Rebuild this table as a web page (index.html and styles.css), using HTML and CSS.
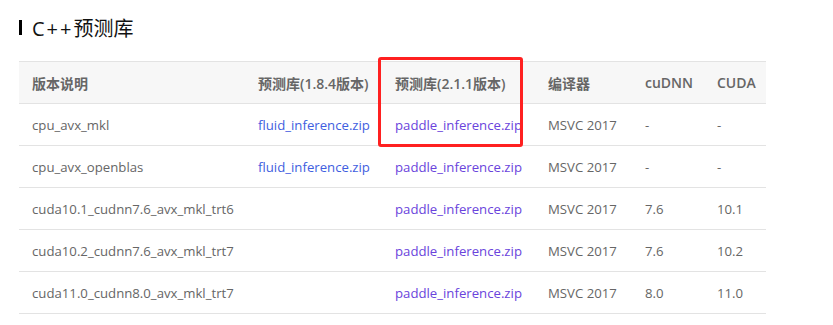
FILE: index.html
```html
<!DOCTYPE html>
<html lang="zh-CN">
<head>
<meta charset="utf-8">
<link rel="stylesheet" href="styles.css">
</head>
<body>
<div class="page">
  <h3 class="title"><span class="bar"></span><span><span class="lang">C++</span>预测库</span></h3>
  <div class="table-wrap">
    <table class="lib">
      <colgroup>
        <col class="c1"><col class="c2"><col class="c3"><col class="c4"><col class="c5"><col class="c6">
      </colgroup>
      <thead>
        <tr><th>版本说明</th><th>预测库(1.8.4版本)</th><th>预测库(2.1.1版本)</th><th>编译器</th><th>cuDNN</th><th>CUDA</th></tr>
      </thead>
      <tbody>
        <tr><td>cpu_avx_mkl</td><td><a class="l-old" href="#">fluid_inference.zip</a></td><td><a class="l-new" href="#">paddle_inference.zip</a></td><td>MSVC 2017</td><td>-</td><td>-</td></tr>
        <tr><td>cpu_avx_openblas</td><td><a class="l-old" href="#">fluid_inference.zip</a></td><td><a class="l-new" href="#">paddle_inference.zip</a></td><td>MSVC 2017</td><td>-</td><td>-</td></tr>
        <tr><td>cuda10.1_cudnn7.6_avx_mkl_trt6</td><td></td><td><a class="l-new" href="#">paddle_inference.zip</a></td><td>MSVC 2017</td><td>7.6</td><td>10.1</td></tr>
        <tr><td>cuda10.2_cudnn7.6_avx_mkl_trt7</td><td></td><td><a class="l-new" href="#">paddle_inference.zip</a></td><td>MSVC 2017</td><td>7.6</td><td>10.2</td></tr>
        <tr><td>cuda11.0_cudnn8.0_avx_mkl_trt7</td><td></td><td><a class="l-new" href="#">paddle_inference.zip</a></td><td>MSVC 2017</td><td>8.0</td><td>11.0</td></tr>
      </tbody>
    </table>
    <div class="highlight"></div>
  </div>
</div>
</body>
</html>
```

FILE: styles.css
```css
html, body {
  margin: 0;
  padding: 0;
  background: #ffffff;
}
body {
  font-family: "Open Sans", "Noto Sans CJK SC", sans-serif;
  color: #666666;
  font-size: 14px;
}
.page {
  padding: 13px 19px 0 19px;
}
.title {
  display: flex;
  align-items: center;
  gap: 10px;
  margin: 0;
  height: 29px;
  font-size: 20px;
  font-weight: normal;
  color: #111111;
}
.lang {
  letter-spacing: 2px;
}
.bar {
  width: 3px;
  height: 15px;
  background: #000000;
}
.table-wrap {
  position: relative;
  margin-top: 19px;
  width: 747px;
}
.lib {
  width: 747px;
  border-collapse: collapse;
  table-layout: fixed;
}
.c1 { width: 226px; }
.c2 { width: 137px; }
.c3 { width: 153px; }
.c4 { width: 97px; }
.c5 { width: 72px; }
.c6 { width: 62px; }
.lib th, .lib td {
  height: 41px;
  padding: 0 0 0 13px;
  text-align: left;
  border-top: 1px solid #e3e3e3;
  border-bottom: 1px solid #e3e3e3;
  white-space: nowrap;
}
.lib td {
  font-size: 13.2px;
}
.lib th {
  background: #f7f7f7;
  font-weight: 600;
  color: #666666;
}
.lib a {
  text-decoration: none;
}
.l-old { color: #3f5ee0; }
.l-new { color: #6a44dc; }
.highlight {
  position: absolute;
  left: 359px;
  top: -4px;
  width: 139px;
  height: 84px;
  border: 3px solid #ff2020;
  border-radius: 3px;
}
```
